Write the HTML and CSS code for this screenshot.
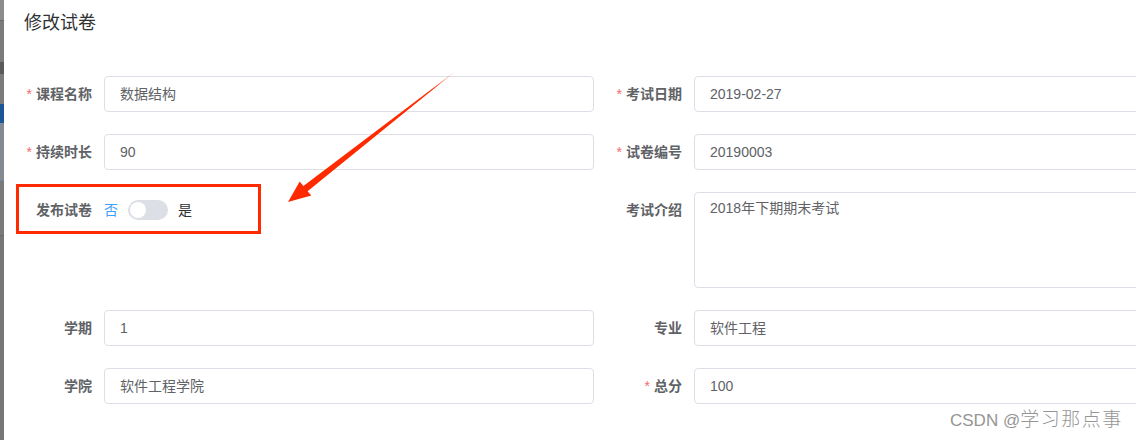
FILE: index.html
```html
<!DOCTYPE html>
<html lang="zh-CN">
<head>
<meta charset="utf-8">
<title>修改试卷</title>
<link rel="stylesheet" href="styles.css">
</head>
<body>
<div class="page">
  <div class="backdrop">
    <div class="bd bd-a"></div>
    <div class="bd bd-b"></div>
    <div class="bd bd-c"></div>
    <div class="bd bd-d"></div>
    <div class="bd bd-e"></div>
    <div class="bd bd-f"></div>
    <div class="bd bd-g"></div>
  </div>
  <div class="dialog">
    <div class="dialog-header"><span class="dialog-title">修改试卷</span></div>
    <div class="dialog-body">
      <div class="form">
        <div class="item">
          <label class="label"><span class="req">*</span>课程名称</label>
          <div class="content"><div class="input">数据结构</div></div>
        </div>
        <div class="item">
          <label class="label"><span class="req">*</span>考试日期</label>
          <div class="content"><div class="input">2019-02-27</div></div>
        </div>
        <div class="item">
          <label class="label"><span class="req">*</span>持续时长</label>
          <div class="content"><div class="input">90</div></div>
        </div>
        <div class="item">
          <label class="label"><span class="req">*</span>试卷编号</label>
          <div class="content"><div class="input">20190003</div></div>
        </div>
        <div class="item">
          <label class="label">发布试卷</label>
          <div class="content">
            <div class="switch">
              <span class="sw-text sw-active">否</span>
              <span class="sw-core"><span class="sw-knob"></span></span>
              <span class="sw-text sw-right">是</span>
            </div>
          </div>
        </div>
        <div class="item">
          <label class="label">考试介绍</label>
          <div class="content"><div class="textarea">2018年下期期末考试</div></div>
        </div>
        <div class="item">
          <label class="label">学期</label>
          <div class="content"><div class="input">1</div></div>
        </div>
        <div class="item">
          <label class="label">专业</label>
          <div class="content"><div class="input">软件工程</div></div>
        </div>
        <div class="item">
          <label class="label">学院</label>
          <div class="content"><div class="input">软件工程学院</div></div>
        </div>
        <div class="item">
          <label class="label"><span class="req">*</span>总分</label>
          <div class="content"><div class="input">100</div></div>
        </div>
      </div>
    </div>
  </div>
  <div class="highlight"></div>
  <svg class="arrow" width="1136" height="440" viewBox="0 0 1136 440">
    <defs>
      <linearGradient id="tail" x1="457" y1="70" x2="300" y2="190" gradientUnits="userSpaceOnUse">
        <stop offset="0" stop-color="#ff2a00" stop-opacity="0.2"/>
        <stop offset="0.15" stop-color="#ff2a00" stop-opacity="1"/>
        <stop offset="1" stop-color="#ff2a00"/>
      </linearGradient>
    </defs>
    <polygon fill="url(#tail)" points="457,70 307.6,191.2 311.3,195.6 288,202 299.7,181.4 303.4,185.9"/>
  </svg>
  <div class="watermark">CSDN @<span class="wm-cjk">学习那点事</span></div>
</div>
</body>
</html>
```
FILE: styles.css
```css
html, body {
  margin: 0;
  padding: 0;
  width: 1136px;
  height: 440px;
  overflow: hidden;
  background: #ffffff;
}

.page {
  position: relative;
  display: flex;
  width: 1136px;
  height: 440px;
  overflow: hidden;
  font-family: "Liberation Sans", "Noto Sans CJK SC", sans-serif;
}

.backdrop {
  width: 4px;
  flex: none;
  display: flex;
  flex-direction: column;
  background: #777777;
}
.bd { width: 4px; flex: none; }
.bd-a { height: 20px; background: #8c8c8c; border-bottom: 1px solid #6a6a6a; }
.bd-b { height: 41px; background: #7b7b7b; }
.bd-c { height: 12px; background: #5a5a5a; }
.bd-d { height: 30px; background: #7b7b7b; }
.bd-e { height: 19px; background: #1c5694; }
.bd-f { height: 56px; background: #838a92; border-top: 1px solid #7a8ea4; border-bottom: 1px solid #6f86a0; }
.bd-g { height: 54px; background: #7a7a7a; border-bottom: 1px solid #6c6c6c; }

.dialog {
  flex: 1;
  min-width: 0;
  background: #ffffff;
  overflow: hidden;
}

.dialog-header {
  padding: 11px 20px 10px;
  height: 24px;
}
.dialog-title {
  font-size: 18px;
  line-height: 24px;
  color: #303133;
}

.dialog-body {
  padding: 31px 20px 0;
}

.form {
  display: grid;
  grid-template-columns: 570px 570px;
  column-gap: 20px;
  row-gap: 22px;
  align-items: start;
}

.item {
  display: flex;
  align-items: flex-start;
}

.label {
  width: 80px;
  flex: none;
  box-sizing: border-box;
  padding-right: 12px;
  text-align: right;
  line-height: 36px;
  font-size: 14px;
  font-weight: bold;
  color: #606266;
}
.req {
  color: #f56c6c;
  margin-right: 4px;
  font-weight: normal;
}

.content {
  flex: 1;
  min-width: 0;
  min-height: 36px;
  display: flex;
  align-items: center;
}

.input {
  width: 100%;
  height: 36px;
  box-sizing: border-box;
  border: 1px solid #dcdfe6;
  border-radius: 4px;
  padding: 0 15px;
  line-height: 34px;
  font-size: 14px;
  color: #606266;
  background: #ffffff;
  white-space: nowrap;
}

.textarea {
  width: 100%;
  height: 96px;
  box-sizing: border-box;
  border: 1px solid #dcdfe6;
  border-radius: 4px;
  padding: 5px 15px;
  line-height: 21px;
  font-size: 14px;
  color: #606266;
  background: #ffffff;
}

.switch {
  display: flex;
  align-items: center;
  height: 36px;
}
.sw-text {
  font-size: 14px;
  line-height: 20px;
  color: #303133;
}
.sw-active {
  color: #409eff;
  margin-right: 10px;
}
.sw-right {
  margin-left: 10px;
}
.sw-core {
  position: relative;
  display: block;
  width: 40px;
  height: 20px;
  border-radius: 10px;
  background: #dcdfe6;
}
.sw-knob {
  position: absolute;
  top: 2px;
  left: 2px;
  width: 16px;
  height: 16px;
  border-radius: 50%;
  background: #ffffff;
}

.highlight {
  position: absolute;
  left: 16px;
  top: 184px;
  width: 245px;
  height: 50px;
  box-sizing: border-box;
  border: 3px solid #ff2a00;
}

.arrow {
  position: absolute;
  left: 0;
  top: 0;
  pointer-events: none;
}

.watermark {
  position: absolute;
  left: 950px;
  top: 408px;
  font-size: 17px;
  line-height: 24px;
  color: #959595;
  white-space: nowrap;
  text-shadow: 0 0 1px #ffffff, 0 0 2px #ffffff;
}
.wm-cjk {
  font-size: 19px;
  font-weight: 300;
  letter-spacing: 1.5px;
}
```
